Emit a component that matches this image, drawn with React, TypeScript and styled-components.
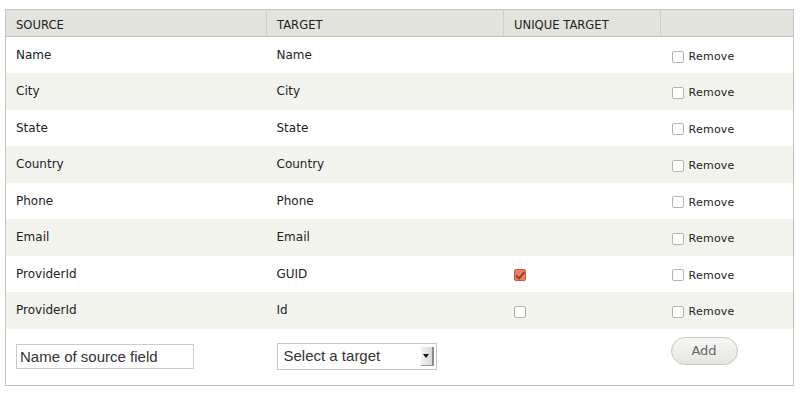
import React from "react";
import styled, { createGlobalStyle } from "styled-components";

const Global = createGlobalStyle`
  html, body { margin: 0; padding: 0; background: #ffffff; }
  body { font-family: "DejaVu Sans", Verdana, sans-serif; }
`;

const Page = styled.div`
  padding: 9px 8px 0 5px;
`;

const Table = styled.table`
  width: 789px;
  border-collapse: collapse;
  border: 1px solid #c4c4bf;
  table-layout: fixed;
  font-family: "DejaVu Sans", Verdana, sans-serif;
  font-size: 12px;
  color: #222;
`;

const HeadCell = styled.th`
  background: #e3e3de;
  height: 27px;
  padding: 3px 0 0 10px;
  box-sizing: border-box;
  text-align: left;
  font-weight: normal;
  font-size: 11.6px;
  color: #222;
  border-bottom: 1px solid #c4c4bf;
  border-right: 1px solid #cfcfca;
  &:last-child { border-right: none; }
`;

const Row = styled.tr<{ $alt?: boolean }>`
  background: ${(p) => (p.$alt ? "#f3f3ee" : "#ffffff")};
`;

const Cell = styled.td<{ $h?: number; $top?: number }>`
  height: ${(p) => p.$h ?? 36.5}px;
  padding: ${(p) => (p.$top !== undefined ? `${p.$top}px 0 0 10px` : "0 0 0 10px")};
  vertical-align: ${(p) => (p.$top !== undefined ? "top" : "middle")};
  box-sizing: border-box;
`;

const CheckLabel = styled.label`
  display: flex;
  align-items: center;
  gap: 5px;
  padding: 3px 0 0 1px;
  font-size: 11px;
  letter-spacing: 0.25px;
  color: #222;
`;

const BoxWrap = styled.div`
  display: flex;
  padding-top: 3px;
`;

const Box = styled.span<{ $checked?: boolean }>`
  display: inline-flex;
  align-items: center;
  justify-content: center;
  box-sizing: border-box;
  width: 12px;
  height: 12px;
  border-radius: 2px;
  border: 1px solid ${(p) => (p.$checked ? "#c9603c" : "#b4b4b0")};
  background: ${(p) => (p.$checked ? "#e9805d" : "#ffffff")};
`;

const TextInput = styled.input`
  box-sizing: border-box;
  width: 178px;
  height: 25px;
  border: 1px solid #cbcbc8;
  padding: 0 3px;
  font-family: "Liberation Sans", Arial, sans-serif;
  font-size: 15px;
  color: #333;
  background: #fff;
  outline: none;
  &::placeholder { color: #333; }
`;

const Select = styled.div`
  box-sizing: border-box;
  width: 160px;
  height: 27px;
  border: 1px solid #c6c6c3;
  display: flex;
  align-items: stretch;
  font-family: "Liberation Sans", Arial, sans-serif;
  font-size: 15px;
  color: #333;
  background: #fff;
  margin-top: -1px;
`;

const SelectText = styled.span`
  flex: 1;
  display: flex;
  align-items: center;
  padding-left: 6px;
  padding-bottom: 1px;
`;

const SelectArrow = styled.span`
  width: 11px;
  margin: 3px 2px 3px 0;
  background: linear-gradient(to right, #f2f2f2, #d8d8d8);
  border-right: 2px solid #8a8a8a;
  border-bottom: 1px solid #9a9a9a;
  display: flex;
  align-items: center;
  justify-content: center;
  &::after {
    content: "";
    border-left: 3px solid transparent;
    border-right: 3px solid transparent;
    border-top: 4px solid #111;
    margin-top: 1px;
  }
`;

const AddButton = styled.button`
  display: block;
  box-sizing: border-box;
  width: 67px;
  height: 28px;
  border-radius: 14px;
  border: 1px solid #c8c8c4;
  background: linear-gradient(to bottom, #f7f7f5, #e4e4e1);
  color: #666;
  font-family: "DejaVu Sans", Verdana, sans-serif;
  font-size: 13px;
  cursor: pointer;
  padding: 0;
`;

const Check = () => (
  <svg width="10" height="9" viewBox="0 0 10 9">
    <path d="M1 4.5 L4 7.5 L9.5 1" fill="none" stroke="#8a3a22" strokeWidth="1.8" />
  </svg>
);

const rows: [string, string, boolean | null][] = [
  ["Name", "Name", null],
  ["City", "City", null],
  ["State", "State", null],
  ["Country", "Country", null],
  ["Phone", "Phone", null],
  ["Email", "Email", null],
  ["ProviderId", "GUID", true],
  ["ProviderId", "Id", false],
];

export default function App() {
  return (
    <>
      <Global />
      <Page>
        <Table>
          <colgroup>
            <col style={{ width: 261 }} />
            <col style={{ width: 237 }} />
            <col style={{ width: 157 }} />
            <col style={{ width: 133 }} />
          </colgroup>
          <thead>
            <tr>
              <HeadCell>SOURCE</HeadCell>
              <HeadCell>TARGET</HeadCell>
              <HeadCell>UNIQUE TARGET</HeadCell>
              <HeadCell></HeadCell>
            </tr>
          </thead>
          <tbody>
            {rows.map(([s, t, u], i) => (
              <Row key={i} $alt={i % 2 === 1}>
                <Cell>{s}</Cell>
                <Cell>{t}</Cell>
                <Cell>
                  {u !== null && (
                    <BoxWrap>
                      <Box $checked={u}>{u && <Check />}</Box>
                    </BoxWrap>
                  )}
                </Cell>
                <Cell>
                  <CheckLabel>
                    <Box />
                    Remove
                  </CheckLabel>
                </Cell>
              </Row>
            ))}
            <Row>
              <Cell $h={57}>
                <TextInput placeholder="Name of source field" />
              </Cell>
              <Cell $h={57}>
                <Select>
                  <SelectText>Select a target</SelectText>
                  <SelectArrow />
                </Select>
              </Cell>
              <Cell $h={57}></Cell>
              <Cell $h={57} $top={8}>
                <AddButton>Add</AddButton>
              </Cell>
            </Row>
          </tbody>
        </Table>
      </Page>
    </>
  );
}
